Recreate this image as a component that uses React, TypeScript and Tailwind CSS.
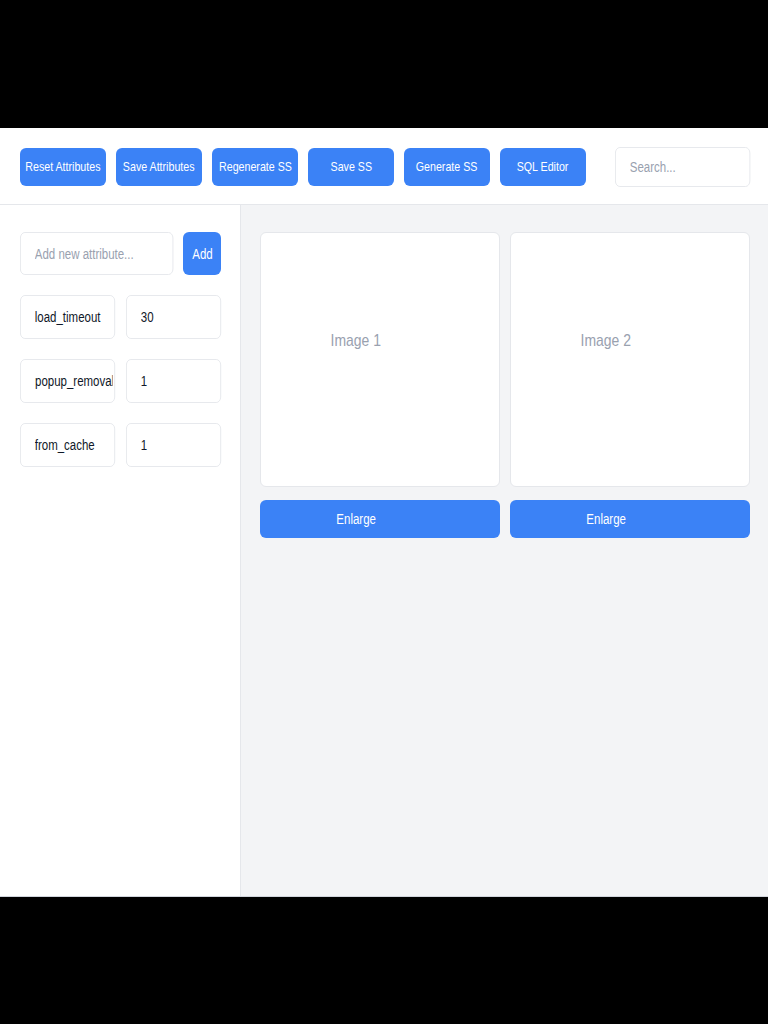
const font = { fontFamily: '"Liberation Sans", Arial, sans-serif' }

const actions = ['Reset Attributes', 'Save Attributes', 'Regenerate SS', 'Save SS', 'Generate SS', 'SQL Editor']

const attributes = [
  { key: 'load_timeout', value: '30' },
  { key: 'popup_removal', value: '1' },
  { key: 'from_cache', value: '1' },
]

// the screenshot's type is condensed, so squeeze the glyphs horizontally
function Narrow({ children }: { children: React.ReactNode }) {
  return <span className="inline-block scale-x-[0.82] whitespace-nowrap">{children}</span>
}

function Field({ placeholder, value }: { placeholder?: string; value?: string }) {
  return (
    <div className="h-full min-w-0">
      <input
        placeholder={placeholder}
        defaultValue={value}
        className="w-[121.95%] h-full origin-left scale-x-[0.82] rounded-md border border-gray-200 bg-white pl-[17px] pr-[2px] text-sm text-gray-900 placeholder:text-gray-400 outline-none"
        style={font}
      />
    </div>
  )
}

function Header() {
  return (
    <header className="flex items-center justify-between bg-white pl-5 pr-[18px] pt-[2px] h-[77px] border-b border-gray-200 shrink-0">
      <div className="flex gap-2.5">
        {actions.map((label) => (
          <button
            key={label}
            className="w-[86px] h-[38px] rounded-md bg-[#3b82f6] text-white text-[13px] flex items-center justify-center"
          >
            <Narrow>{label}</Narrow>
          </button>
        ))}
      </div>
      <div className="w-[135px] h-10">
        <Field placeholder="Search..." />
      </div>
    </header>
  )
}

function Sidebar() {
  return (
    <aside className="w-[241px] shrink-0 bg-white border-r border-gray-200 pl-5 pr-[19px] pt-[27px] flex flex-col gap-5">
      <div className="flex gap-2.5 h-[43px]">
        <div className="w-[153px] h-full">
          <Field placeholder="Add new attribute..." />
        </div>
        <button className="w-[38px] h-full rounded-md bg-[#3b82f6] text-white text-sm flex items-center justify-center">
          <Narrow>Add</Narrow>
        </button>
      </div>
      {attributes.map((a) => (
        <div key={a.key} className="grid grid-cols-2 gap-2.5 h-[44px]">
          <Field value={a.key} />
          <Field value={a.value} />
        </div>
      ))}
    </aside>
  )
}

function ImagePanel({ label }: { label: string }) {
  return (
    <div className="flex flex-col gap-[13px]">
      <div className="h-[255px] rounded-md border border-gray-200 bg-white flex items-center justify-center pr-[48px] pb-[38px]">
        <span className="text-[17px] text-gray-400">
          <Narrow>{label}</Narrow>
        </span>
      </div>
      <button className="h-[38px] rounded-md bg-[#3b82f6] text-white text-sm flex items-center justify-center pr-[48px]">
        <Narrow>Enlarge</Narrow>
      </button>
    </div>
  )
}

export default function App() {
  return (
    <div className="bg-black h-[1024px] flex flex-col" style={font}>
      <div className="h-[128px] shrink-0" />
      <div className="h-[769px] shrink-0 flex flex-col bg-white border-b border-gray-300">
        <Header />
        <div className="flex flex-1 min-h-0">
          <Sidebar />
          <main className="flex-1 bg-gray-100 pl-[19px] pr-[18px] pt-[27px]">
            <div className="grid grid-cols-2 gap-2.5">
              <ImagePanel label="Image 1" />
              <ImagePanel label="Image 2" />
            </div>
          </main>
        </div>
      </div>
    </div>
  )
}
